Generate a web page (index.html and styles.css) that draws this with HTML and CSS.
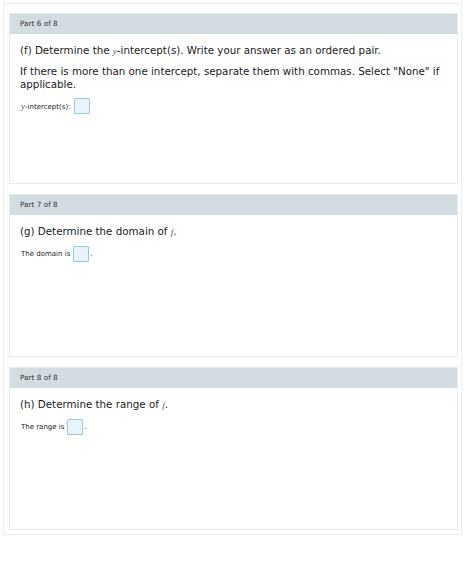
FILE: index.html
```html
<!DOCTYPE html>
<html lang="en">
<head>
  <meta charset="UTF-8">
  <title>Parts 6 to 8</title>
  <link rel="stylesheet" href="styles.css">
</head>
<body>

<div class="panel">
  <div class="prev"></div>

  <!-- Part 6 -->
  <div class="part part-tall">
    <div class="part-head">Part 6 of 8</div>
    <div class="part-body">
      <p class="question">(f) Determine the <i class="var">y</i>-intercept(s). Write your answer as an ordered pair.</p>
      <p class="question">If there is more than one intercept, separate them with commas. Select "None" if applicable.</p>
      <div class="answer">
        <span><i class="var">y</i>-intercept(s):</span>
        <span class="box"></span>
      </div>
    </div>
  </div>

  <!-- Part 7 -->
  <div class="part">
    <div class="part-head">Part 7 of 8</div>
    <div class="part-body">
      <p class="question">(g) Determine the domain of <i class="var">f</i>.</p>
      <div class="answer">
        <span>The domain is</span>
        <span class="box"></span><span class="dot">.</span>
      </div>
    </div>
  </div>

  <!-- Part 8 -->
  <div class="part">
    <div class="part-head">Part 8 of 8</div>
    <div class="part-body">
      <p class="question">(h) Determine the range of <i class="var">f</i>.</p>
      <div class="answer">
        <span>The range is</span>
        <span class="box"></span><span class="dot">.</span>
      </div>
    </div>
  </div>
</div>

</body>
</html>
```

FILE: styles.css
```css
body {
  font-family: "DejaVu Sans", Verdana, sans-serif;
  background: #fff;
  color: #1a1a1a;
  margin: 0;
  padding: 0;
}

.panel {
  width: 459px;
  margin-left: 3px;
  border: 1px solid #eceeef;
  border-top: none;
  padding: 0 3px 4px 5px;
  box-sizing: border-box;
}

.prev {
  height: 3px;
  border-bottom: 1px solid #eceeef;
  margin: 0 -3px 9px -5px;
}

.part {
  border: 1px solid #e8eaeb;
  margin-bottom: 10px;
  background: #fff;
}

.part:last-child {
  margin-bottom: 0;
}

.part-head {
  background: #d3dce0;
  height: 20px;
  line-height: 20px;
  padding-left: 10px;
  font-size: 7.3px;
  color: #333;
}

.part-body {
  min-height: 141px;
  padding: 10px 10px 0 10px;
  box-sizing: border-box;
}

.part-tall .part-body {
  min-height: 149px;
}

.question {
  font-size: 10.3px;
  line-height: 13px;
  margin: 0 0 7px 0;
}

.var {
  font-family: "Liberation Serif", serif;
  font-size: 9px;
  color: #555;
}

.answer {
  display: flex;
  align-items: center;
  gap: 3px;
  font-size: 7px;
  margin-top: 7px;
  padding-left: 1px;
}

.box {
  display: inline-block;
  width: 14px;
  height: 14px;
  background: #e8f4fb;
  border: 1px solid #9fc6d6;
  border-radius: 1px;
}

.dot {
  margin-left: -2px;
}
```
